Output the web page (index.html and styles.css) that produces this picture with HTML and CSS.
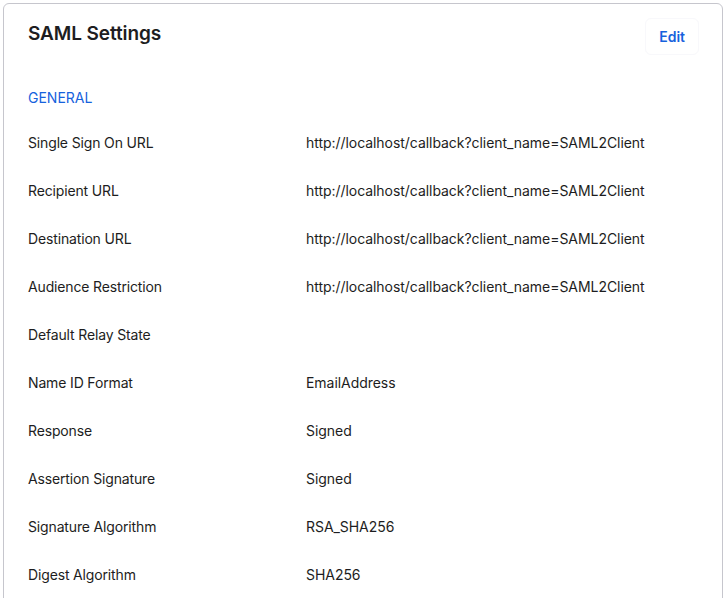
FILE: index.html
```html
<!DOCTYPE html>
<html lang="en">
<head>
<meta charset="utf-8">
<title>SAML Settings</title>
<link rel="stylesheet" href="styles.css">
</head>
<body>
<div class="card">
  <div class="card-header">
    <h2 class="card-title">SAML Settings</h2>
    <button class="edit-btn" type="button">Edit</button>
  </div>
  <h3 class="section-title">GENERAL</h3>
  <dl class="fields">
    <div class="row"><dt>Single Sign On URL</dt><dd>http://localhost/callback?client_name=SAML2Client</dd></div>
    <div class="row"><dt>Recipient URL</dt><dd>http://localhost/callback?client_name=SAML2Client</dd></div>
    <div class="row"><dt>Destination URL</dt><dd>http://localhost/callback?client_name=SAML2Client</dd></div>
    <div class="row"><dt>Audience Restriction</dt><dd>http://localhost/callback?client_name=SAML2Client</dd></div>
    <div class="row"><dt>Default Relay State</dt><dd></dd></div>
    <div class="row"><dt>Name ID Format</dt><dd>EmailAddress</dd></div>
    <div class="row"><dt>Response</dt><dd>Signed</dd></div>
    <div class="row"><dt>Assertion Signature</dt><dd>Signed</dd></div>
    <div class="row"><dt>Signature Algorithm</dt><dd>RSA_SHA256</dd></div>
    <div class="row"><dt>Digest Algorithm</dt><dd>SHA256</dd></div>
  </dl>
</div>
</body>
</html>
```

FILE: styles.css
```css
html, body {
  margin: 0;
  background: #ffffff;
}
body {
  padding: 3px 4px 0 3px;
  font-family: "Inter", "Noto Sans", sans-serif;
  color: #1d1d21;
  overflow: hidden;
}
.card {
  border: 1px solid #c6c6cd;
  border-radius: 6px;
  padding: 15px 23px 24px 24px;
  background: #fff;
}
.card-header {
  display: flex;
  justify-content: space-between;
  align-items: flex-start;
}
.card-title {
  margin: 0;
  font-size: 19px;
  line-height: 30px;
  font-weight: 600;
  letter-spacing: -0.1px;
  color: #1d1d21;
}
.edit-btn {
  margin-top: -1px;
  height: 37px;
  padding: 0 13px;
  border: 1px solid #f8f8fb;
  border-radius: 6px;
  background: #fff;
  color: #1662dd;
  font-family: inherit;
  font-size: 14px;
  font-weight: 600;
}
.section-title {
  margin: 33px 0 11px;
  font-size: 14px;
  line-height: 20px;
  font-weight: 400;
  color: #1662dd;
}
.fields {
  margin: 0;
}
.row {
  display: grid;
  grid-template-columns: 278px 1fr;
  padding: 14px 0;
  font-size: 14px;
  line-height: 20px;
}
.row dt, .row dd {
  margin: 0;
}
.row dt {
  letter-spacing: -0.15px;
}
.row dd {
  letter-spacing: -0.05px;
}
```
